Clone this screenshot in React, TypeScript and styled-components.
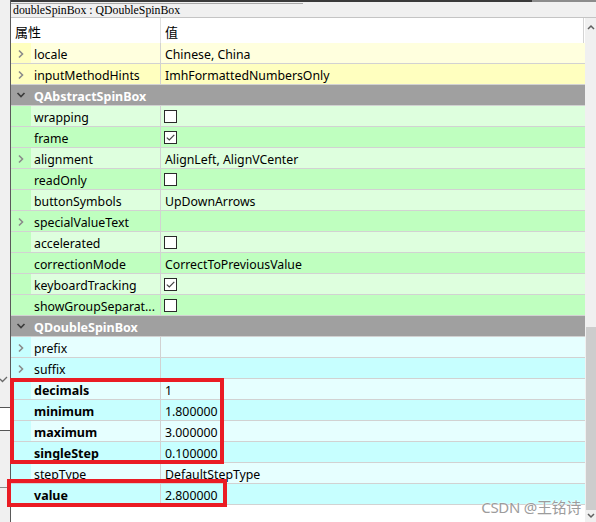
import styled, { createGlobalStyle } from 'styled-components'

const GlobalStyle = createGlobalStyle`
  html, body {
    margin: 0;
    padding: 0;
    background: #ffffff;
  }
  body {
    font-family: "Noto Sans", "Noto Sans CJK SC", sans-serif;
  }
`

type Tone = 'yellow' | 'green' | 'cyan'

const base: Record<Tone, string> = {
  yellow: '#ffffbf',
  green: '#bfffbf',
  cyan: '#c7ffff',
}

const light: Record<Tone, string> = {
  yellow: '#ffffde',
  green: '#deffde',
  cyan: '#e6ffff',
}

const Screen = styled.div`
  position: relative;
  width: 596px;
  height: 522px;
  display: flex;
  overflow: hidden;
  background: #f0f0f0;
`

const SideStrip = styled.div`
  width: 10px;
  flex: none;
  display: flex;
  flex-direction: column;
  border-right: 1px solid #5a5a5a;
  background: #f0f0f0;
`

const SideTick = styled.svg`
  margin-top: 375px;
  width: 10px;
  height: 9px;
`

const SideBox = styled.div`
  margin-top: 23px;
  height: 22px;
  background: #ffffff;
  border-top: 1px solid #555;
  border-bottom: 1px solid #555;
`

const SideLine = styled.div`
  margin-top: 56px;
  height: 1px;
  background: #8a8a8a;
`

const Panel = styled.div`
  flex: 1;
  min-width: 0;
  display: flex;
  flex-direction: column;
`

const TopEdge = styled.div`
  height: 2px;
  flex: none;
  background: linear-gradient(to right, #3a3a3a 521px, #8c8c8c 521px);
`

const TitleBar = styled.div`
  height: 15px;
  flex: none;
  background: #f0f0f0;
  border-bottom: 1px solid #c4c4c4;
`

const TitleLabel = styled.div`
  margin-top: 1px;
  width: 290px;
  height: 14px;
  border-top: 1px solid #a8a8a8;
  padding-left: 2px;
  font-family: "Liberation Serif", serif;
  font-size: 11.8px;
  line-height: 13px;
  color: #000;
`

const Body = styled.div`
  flex: 1;
  display: flex;
  min-height: 0;
`

const Table = styled.div`
  flex: 1;
  display: flex;
  flex-direction: column;
  background: #ffffff;
`

const HeaderRow = styled.div`
  height: 25px;
  flex: none;
  display: flex;
  background: #ffffff;
  border-right: 1px solid #d4d4d4;
  margin-right: 1px;
`

const HeaderCell = styled.div<{ $first?: boolean }>`
  width: ${p => (p.$first ? '150px' : 'auto')};
  flex: ${p => (p.$first ? 'none' : '1')};
  box-sizing: border-box;
  padding: 3px 0 0 4px;
  border-right: ${p => (p.$first ? '1px solid #e0e0e0' : 'none')};
  font-family: "Noto Sans CJK SC", sans-serif;
  font-size: 13px;
  line-height: 22px;
  color: #000;
`

const Row = styled.div<{ $tone: Tone }>`
  height: 20px;
  flex: none;
  display: flex;
  background: ${p => base[p.$tone]};
  border-bottom: 1px solid #d2d2d2;
`

const Branch = styled.div<{ $drop?: number }>`
  width: 20px;
  flex: none;
  display: flex;
  align-items: center;
  justify-content: center;
  padding-top: ${p => p.$drop ?? 0}px;
  box-sizing: border-box;
`

const NameCell = styled.div<{ $tone: Tone; $alt: boolean; $bold?: boolean }>`
  width: 130px;
  flex: none;
  box-sizing: border-box;
  padding: 3px 0 0 3px;
  border-right: 1px solid #d2d2d2;
  background: ${p => (p.$alt ? light[p.$tone] : base[p.$tone])};
  font-size: ${p => (p.$bold ? '12.5px' : '12.3px')};
  line-height: 17px;
  font-weight: ${p => (p.$bold ? 700 : 400)};
  color: #000;
  white-space: nowrap;
  overflow: hidden;
`

const ValueCell = styled.div<{ $tone: Tone; $alt: boolean }>`
  flex: 1;
  display: flex;
  align-items: center;
  box-sizing: border-box;
  padding: 3px 0 0 4px;
  background: ${p => (p.$alt ? light[p.$tone] : base[p.$tone])};
  font-size: 12.3px;
  line-height: 17px;
  color: #000;
  white-space: nowrap;
`

const GroupRow = styled.div`
  height: 20px;
  flex: none;
  display: flex;
  background: #a0a0a0;
  border-bottom: 1px solid #d2d2d2;
`

const GroupTitle = styled.div`
  padding: 3px 0 0 3px;
  font-size: 12.5px;
  line-height: 17px;
  font-weight: 700;
  color: #ffffff;
`

const CheckBox = styled.div`
  width: 11px;
  height: 11px;
  margin: -3px 0 0 -1px;
  border: 1px solid #2a2a2a;
  background: #ffffff;
  display: flex;
`

const ScrollBar = styled.div`
  width: 11px;
  flex: none;
  display: flex;
  flex-direction: column;
  background: #f0f0f0;
`

const ArrowBox = styled.div<{ $h: number }>`
  height: ${p => p.$h}px;
  flex: none;
  display: flex;
  align-items: center;
  justify-content: center;
`

const Track = styled.div`
  flex: 1;
  display: flex;
  flex-direction: column;
  justify-content: flex-end;
`

const Thumb = styled.div`
  height: 183px;
  margin-left: 1px;
  background: #cdcdcd;
`

const Highlight = styled.div<{ $x: number; $y: number; $w: number; $h: number }>`
  position: absolute;
  left: ${p => p.$x}px;
  top: ${p => p.$y}px;
  width: ${p => p.$w}px;
  height: ${p => p.$h}px;
  box-sizing: border-box;
  border: 4px solid #ea1c24;
  pointer-events: none;
`

const Watermark = styled.div`
  position: absolute;
  right: 15px;
  bottom: 6px;
  font-family: "Noto Sans", "Noto Sans CJK SC", sans-serif;
  font-size: 15px;
  line-height: 18px;
  color: #9c9c9c;
  text-shadow: 0 0 2px #ffffff, 0 0 1px #ffffff;
  letter-spacing: -0.3px;
`

const RightChevron = () => (
  <svg width="8" height="10" viewBox="0 0 8 10">
    <path d="M2 1.5 L5.5 5 L2 8.5" fill="none" stroke="#8a8a8a" strokeWidth="1.6" />
  </svg>
)

const DownChevron = () => (
  <svg width="10" height="8" viewBox="0 0 10 8">
    <path d="M1.5 2 L5 5.5 L8.5 2" fill="none" stroke="#3c3c3c" strokeWidth="1.7" />
  </svg>
)

const Check = ({ on }: { on: boolean }) => (
  <CheckBox>
    {on && (
      <svg width="11" height="11" viewBox="0 0 11 11">
        <path d="M1.8 5.6 L4.3 8 L9.3 2.8" fill="none" stroke="#444" strokeWidth="1.2" />
      </svg>
    )}
  </CheckBox>
)

type Prop = {
  name: string
  value?: string
  check?: boolean
  expand?: boolean
  bold?: boolean
}

type Group = { title?: string; tone: Tone; props: Prop[] }

const groups: Group[] = [
  {
    tone: 'yellow',
    props: [
      { name: 'locale', value: 'Chinese, China', expand: true },
      { name: 'inputMethodHints', value: 'ImhFormattedNumbersOnly', expand: true },
    ],
  },
  {
    title: 'QAbstractSpinBox',
    tone: 'green',
    props: [
      { name: 'wrapping', check: false },
      { name: 'frame', check: true },
      { name: 'alignment', value: 'AlignLeft, AlignVCenter', expand: true },
      { name: 'readOnly', check: false },
      { name: 'buttonSymbols', value: 'UpDownArrows' },
      { name: 'specialValueText', value: '', expand: true },
      { name: 'accelerated', check: false },
      { name: 'correctionMode', value: 'CorrectToPreviousValue' },
      { name: 'keyboardTracking', check: true },
      { name: 'showGroupSeparat...', check: false },
    ],
  },
  {
    title: 'QDoubleSpinBox',
    tone: 'cyan',
    props: [
      { name: 'prefix', value: '', expand: true },
      { name: 'suffix', value: '', expand: true },
      { name: 'decimals', value: '1', bold: true },
      { name: 'minimum', value: '1.800000', bold: true },
      { name: 'maximum', value: '3.000000', bold: true },
      { name: 'singleStep', value: '0.100000', bold: true },
      { name: 'stepType', value: 'DefaultStepType' },
      { name: 'value', value: '2.800000', bold: true },
    ],
  },
]

const PropertyRow = ({ p, tone, alt }: { p: Prop; tone: Tone; alt: boolean }) => (
  <Row $tone={tone}>
    <Branch $drop={2}>{p.expand && <RightChevron />}</Branch>
    <NameCell $tone={tone} $alt={alt} $bold={p.bold}>
      {p.name}
    </NameCell>
    <ValueCell $tone={tone} $alt={alt}>
      {p.check !== undefined ? <Check on={p.check} /> : p.value}
    </ValueCell>
  </Row>
)

const App = () => {
  return (
    <>
      <GlobalStyle />
      <Screen>
        <SideStrip>
          <SideTick viewBox="0 0 10 9">
            <path d="M0 4 L2.5 6.5 L7 2" fill="none" stroke="#6a6a6a" strokeWidth="1.3" />
          </SideTick>
          <SideBox />
          <SideLine />
        </SideStrip>
        <Panel>
          <TopEdge />
          <TitleBar>
            <TitleLabel>doubleSpinBox : QDoubleSpinBox</TitleLabel>
          </TitleBar>
          <Body>
            <Table>
              <HeaderRow>
                <HeaderCell $first>属性</HeaderCell>
                <HeaderCell>值</HeaderCell>
              </HeaderRow>
              {groups.map((g, gi) => (
                <div key={gi}>
                  {g.title && (
                    <GroupRow>
                      <Branch>
                        <DownChevron />
                      </Branch>
                      <GroupTitle>{g.title}</GroupTitle>
                    </GroupRow>
                  )}
                  {g.props.map((p, i) => (
                    <PropertyRow key={p.name} p={p} tone={g.tone} alt={i % 2 === 0} />
                  ))}
                </div>
              ))}
            </Table>
            <ScrollBar>
              <ArrowBox $h={17}>
                <svg width="8" height="6" viewBox="0 0 8 6">
                  <path d="M1 5 L4 2 L7 5" fill="none" stroke="#606060" strokeWidth="1.5" />
                </svg>
              </ArrowBox>
              <Track>
                <Thumb />
              </Track>
              <ArrowBox $h={12}>
                <svg width="8" height="6" viewBox="0 0 8 6">
                  <path d="M1 1 L4 4 L7 1" fill="none" stroke="#606060" strokeWidth="1.5" />
                </svg>
              </ArrowBox>
            </ScrollBar>
          </Body>
        </Panel>
        <Highlight $x={10} $y={378} $w={214} $h={86} />
        <Highlight $x={7} $y={479} $w={220} $h={28} />
        <Watermark>CSDN @王铭诗</Watermark>
      </Screen>
    </>
  )
}

export default App
